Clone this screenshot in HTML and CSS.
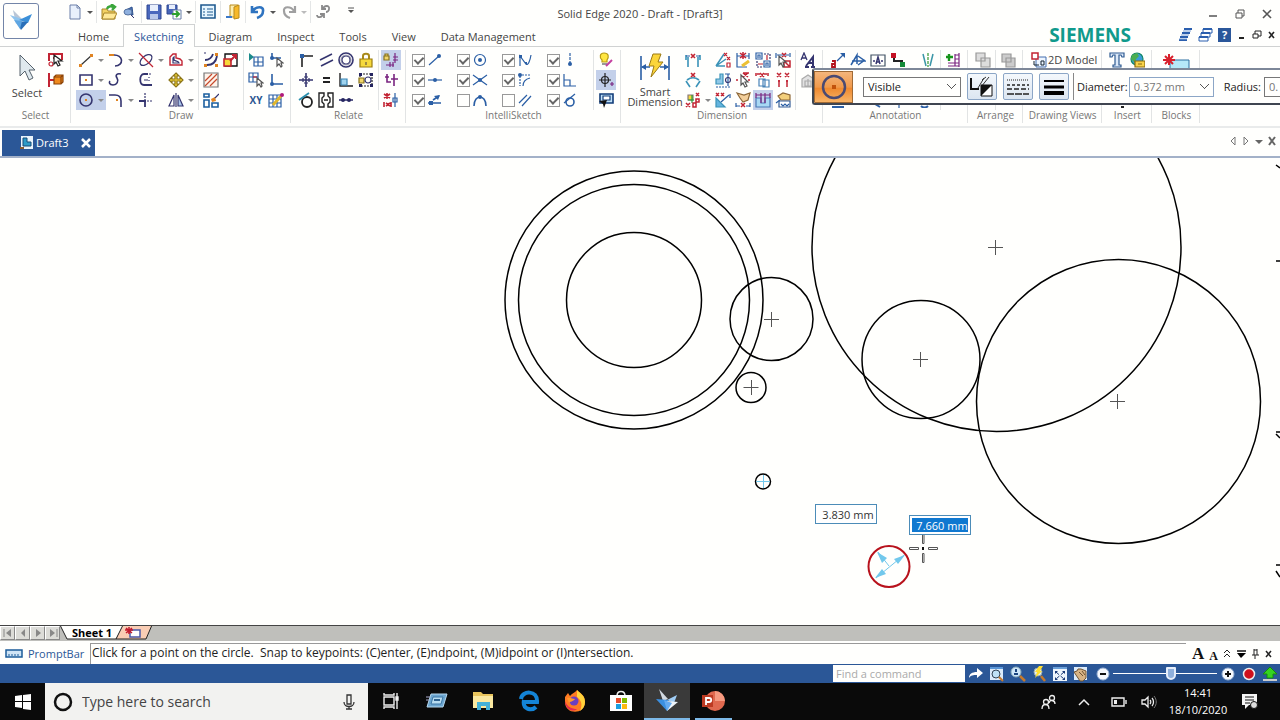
FILE: index.html
```html
<!DOCTYPE html>
<html lang="en">
<head>
<meta charset="utf-8">
<title>Solid Edge 2020 - Draft - [Draft3]</title>
<link rel="stylesheet" href="styles.css">
</head>
<body>
<header class="head">
  <button class="logo" aria-label="Application menu"><svg width="24" height="24" viewBox="0 0 24 24"><path fill="#b9c6d6" d="M4 1l9 9-6 5z"/><path fill="#8fc4ee" d="M1 6l12 4-4 5z"/><path fill="#3b8fd8" d="M10 11l13-6-4 9z"/><path fill="#2a6fb8" d="M7 12l12 1-7 8z"/><path fill="#5ea6e2" d="M5 11l8 1-2 8z"/></svg></button>
  <div class="qat">
    <button class="q" aria-label="New"><svg><path fill="#e8f0fc" stroke="#6b7fa8" d="M3 1h7l3 3v11H3zM10 1v3h3"/></svg></button><i class="dn"></i><i class="sep"></i>
    <button class="q" aria-label="Open"><svg><path fill="#f3d264" stroke="#a8862a" d="M1 5h5l1 2h7v8H1z"/><path fill="#ffe998" stroke="#a8862a" d="M3 9h13l-3 6H1z"/><path stroke="#3aa63a" stroke-width="2.4" d="M6 5c1-3 4-3 6-2M10 0l4 3-3 3"/></svg></button>
    <button class="q" aria-label="Pin"><svg><path fill="#4d74b4" stroke="#2b4f8c" d="M11 3l1 8-4-1-3-4z"/><ellipse cx="7" cy="8" rx="4" ry="3" fill="#8fb0de" stroke="#54719f"/><path d="M10 11l3 3"/></svg></button><i class="sep"></i>
    <button class="q" aria-label="Save"><svg><path fill="#4a68bd" stroke="#2f4790" d="M1 1h14v14H1z"/><path fill="#e8effc" d="M4 1h8v6H4z" stroke="none"/><path fill="#b9c8ea" d="M4 10h8v5H4z" stroke="none"/></svg></button>
    <button class="q" aria-label="Save all"><svg><path fill="#4766b8" stroke="#2f4790" d="M1 1h10v9H1z"/><path fill="#e8effc" stroke="none" d="M3 1h6v4H3z"/><path fill="#fff" stroke="#6b7fa8" d="M7 6h8v9H7z"/><path stroke="#2da12d" stroke-width="2" d="M6 10h6M10 7l3 3-3 3"/></svg></button><i class="dn"></i><i class="sep"></i>
    <button class="q" aria-label="List"><svg><path fill="#e6f6ff" stroke="#1f5a8f" stroke-width="1.600" d="M1 1h14v13H1z"/><path stroke="#1f5a8f" d="M3 5h2M7 5h6M3 8h2M7 8h6M3 11h2M7 11h6"/></svg></button><i class="sep"></i>
    <button class="q" aria-label="Exit"><svg><path fill="#fdeeb0" stroke="#b98a18" d="M5 1h8v12H5z"/><path fill="#f7b928" stroke="#b98a18" d="M9 3l5-2v13l-5 1z"/><path stroke="#3a78c8" stroke-width="2" d="M1 13h6"/></svg></button><i class="sep"></i>
    <button class="q" aria-label="Undo"><svg><path stroke="#2f74c0" stroke-width="2.6" d="M3 7c3-5 11-5 10 0 0 4-3 6-6 7M2 2v6h6"/></svg></button><i class="dn"></i>
    <button class="q gap" aria-label="Redo"><svg><path stroke="#a0a0a0" stroke-width="2.2" d="M13 7C10 2 2 2 3 7c0 4 3 6 6 7M14 2v6H8"/></svg></button><i class="dn pale"></i><i class="sep"></i>
    <button class="q" aria-label="Repeat"><svg><path stroke="#8a8a8a" stroke-width="1.8" d="M8 5c1-4 7-4 6 0 0 2-2 3-3 3M7 1v4h4M8 10c-1 4-6 4-6 1M9 14v-4H5"/></svg></button><button class="q more" aria-label="Customise toolbar"><svg><path stroke="#555" d="M5 4h6"/><path fill="#555" stroke="none" d="M5 6h6l-3 3z"/></svg></button>
  </div>
  <h1 class="title">Solid Edge 2020 - Draft - [Draft3]</h1>
  <div class="win">
    <button aria-label="Minimise"><svg><path stroke-width="1.500" d="M4 10h8"/></svg></button>
    <button aria-label="Restore"><svg><path d="M4 7h6v5H4zM6 7V4h6v6h-2"/></svg></button>
    <button aria-label="Close"><svg><path stroke-width="1.6" d="M4 4l8 8M12 4l-8 8"/></svg></button>
  </div>
  <nav class="tabs">
    <button class="tab">Home</button><button class="tab on">Sketching</button><button class="tab">Diagram</button><button class="tab">Inspect</button><button class="tab">Tools</button><button class="tab">View</button><button class="tab">Data Management</button>
    <strong class="brand">SIEMENS</strong>
    <div class="mdi">
      <button class="q" aria-label="Cascade"><svg><path stroke="#2b5fae" stroke-width="2" d="M7 2h8M5 6h8M3 10h8M2 13h8"/><path stroke="#7a9fd4" d="M6 4h8M4 8h8M2 12h8"/></svg></button>
      <button class="q" aria-label="Switch windows"><svg><path fill="#fff" stroke="#2b5fae" d="M6 2h9v4H6zM4 6h9v4H4zM2 10h9v4H2z"/><path stroke="#2b5fae" stroke-width="2" d="M6 2h9M4 6h9M2 10h9"/></svg></button>
      <button class="q help" aria-label="Help">?</button>
      <button class="s" aria-label="Minimise document"><svg><path stroke="#222" stroke-width="2" d="M5 11h5"/></svg></button>
      <button class="s" aria-label="Restore document"><svg><path stroke="#222" d="M4 7h5v4H4zM6 7V4h6v5H9"/></svg></button>
      <button class="s" aria-label="Close document"><svg><path stroke="#222" stroke-width="1.6" d="M5 5l5 6M10 5l-5 6"/></svg></button>
    </div>
  </nav>
</header>

<section class="ribbon" aria-label="Sketching">
  <div class="group">
    <div class="body lead">
      <button class="big"><svg width="22" height="30"><path fill="#dfe9ee" stroke="#56626c" d="M4 2v21l5-5 4 9 4-2-4-8h6z"/></svg><span>Select</span></button>
      <div class="grid g20">
        <button aria-label="Select options"><svg><path class="r" stroke-width="2" d="M1 9V2h13v6M5 6h2"/><circle class="r" cx="3" cy="12" r="2"/><path fill="#fff" stroke="#222" d="M6 3v9l2-2 2 4 2-1-2-4h4z"/></svg></button>
        <button aria-label="Part"><svg><path class="r" stroke-width="2" d="M1 1v14M1 8h6"/><path fill="#f08a1d" stroke="#8a4308" d="M6 5l2-2h7v7l-2 2H6zM6 5h7v7M13 5l2-2"/></svg></button>
      </div>
    </div>
    <span class="cap">Select</span>
  </div>
  <div class="group">
    <div class="body">
      <div class="grid g30">
        <button class="dd" aria-label="Line"><svg><path d="M3 13L14 3" stroke="#333"/><path class="o" d="M1 12h3v3H1zM12 2h3v3h-3z"/></svg></button>
        <button class="dd" aria-label="Rectangle"><svg><path stroke-width="1.6" d="M2 3h12v10H2z"/><path class="o" d="M7 7h2v2H7z"/></svg></button>
        <button class="dd sel" aria-label="Circle"><svg><circle cx="8" cy="8" r="6" stroke-width="1.6"/><path class="o" d="M7 7h2v2H7z"/></svg></button>
        <button class="dd" aria-label="Arc"><svg><path stroke-width="1.6" d="M5 3c11-1 11 11 2 11"/><path class="o" d="M1 2h5v2H1z"/></svg></button>
        <button aria-label="Curve"><svg><path stroke-width="1.6" d="M13 2c-4-1-6 1-4 4s0 7-4 7-4-3-3-4"/></svg></button>
        <button class="dd" aria-label="Fillet"><svg><path stroke-width="1.6" d="M1 3h6c4 0 6 2 6 6v6"/><path class="o" d="M8 7h2v2H8z"/></svg></button>
        <button class="dd" aria-label="Split"><svg><ellipse cx="8" cy="8" rx="7" ry="4" transform="rotate(-40 8 8)"/><path class="r" d="M1 1l14 14"/></svg></button>
        <button aria-label="Extend"><svg><path stroke-width="1.8" d="M10 2H6c-5 0-5 11 0 11h8"/><path d="M11 2h2M11 5v1M11 8v1M6 8h4"/></svg></button>
        <button aria-label="Trim corner"><svg><path stroke-width="1.8" d="M1 9h7M7 9v6"/><path stroke-dasharray="2 1" d="M7 1v7M9 9h6"/></svg></button>
        <button class="dd" aria-label="Offset"><svg><path class="r" stroke-width="1.4" d="M2 13V5l3-3h3v4l4 1 2 2v4z"/><path d="M5 11V6l1-1v3c2 2 4 0 5 3z"/></svg></button>
        <button class="dd" aria-label="Move"><svg><path fill="#f7d93a" stroke="#8b7418" d="M8 1l3 3H9v3h3V5l3 3-3 3V9H9v3h2l-3 3-3-3h2V9H4v2L1 8l3-3v2h3V4H5z"/></svg></button>
        <button class="dd" aria-label="Mirror"><svg><path fill="#a9c4e8" d="M10 4v10h5z" stroke="none"/><path d="M6 3v11H1zM10 3v11h5zM8 1v14"/></svg></button>
      </div>
      <i class="rule"></i>
      <div class="grid g20">
        <button aria-label="Blend"><svg><path stroke-width="1.8" d="M2 8c5 0 7-3 8-6M4 13c6 0 9-3 10-9"/><path class="o" d="M1 12h3v3H1zM12 1h3v3h-3zM12 12h3v3h-3z"/><path d="M1 1h2"/></svg></button>
        <button aria-label="Fill"><svg><path fill="#fff3ea" stroke="#777" d="M1 1h14v14H1z"/><path stroke="#c6492c" d="M2 9l7-7M2 14L14 2M7 14l7-7"/></svg></button>
        <button aria-label="Clean sketch"><svg><path stroke="#1c5f9e" stroke-width="1.6" d="M1 2h5v3H1zM1 8h5v7H1zM9 11h6v4H9z"/><path class="o" d="M8 7l4-2 1 4-4 1z"/><path d="M12 6l4-4"/></svg></button>
        <button aria-label="Scale"><svg><path stroke="#111" stroke-width="1.4" d="M2 2h12v12H2z"/><path fill="#f7d93a" class="r" stroke-width="1.6" d="M1 7h7v7H1z"/><path class="r" stroke-width="2" d="M7 9l6-6M9 3h4v4"/></svg></button>
      </div>
      <i class="rule"></i>
      <div class="grid g20">
        <button aria-label="Snap to grid"><svg><path fill="#1b8b8b" stroke="none" d="M1 1l5 4-5 4z"/><path class="b" d="M6 5h9v9H6zM10 5v9M6 10h9"/></svg></button>
        <button aria-label="Select grid"><svg><path class="b" d="M1 1h9v9H1zM5 1v9M1 5h9"/><path class="r" d="M5 5h4"/><path fill="#fff" stroke="#555" d="M9 6v8l2-2 2 3 1-1-1-3h2z"/></svg></button>
        <button aria-label="XY key-in"><b class="xy">XY</b></button>
        <button aria-label="Reposition origin"><svg><path class="b" stroke-width="1.6" d="M4 1v5h9"/><circle class="bf" cx="4" cy="6" r="2"/><path fill="#fff" stroke="#555" d="M9 6v8l2-2 2 3 1-1-1-3h2z"/></svg></button>
        <button aria-label="Zero origin"><svg><path class="b" stroke-width="1.6" d="M4 2v10h11"/><circle class="bf" cx="4" cy="12" r="2"/></svg></button>
        <button aria-label="Grid options"><svg><path class="b" d="M1 3h12v12H1zM5 3v12M9 3v12M1 7h12M1 11h12"/><path stroke="#e0b62c" stroke-width="3" d="M5 13l8-9"/><circle cx="14" cy="3" r="2" fill="#b0187a" stroke="none"/></svg></button>
      </div>
    </div>
    <span class="cap">Draw</span>
  </div>
  <div class="group">
    <div class="body">
      <div class="grid g20">
        <button aria-label="Connect"><svg><path stroke="#222" stroke-width="1.6" d="M4 15V4h11"/><path class="bf" d="M2 2h4v4H2z"/></svg></button>
        <button aria-label="Horizontal or vertical"><svg><path stroke-width="1.6" d="M1 8h14M8 1v14"/><path d="M5 6v4M11 6v4M6 5h4M6 11h4"/></svg></button>
        <button aria-label="Tangent"><svg><circle cx="9" cy="10" r="5" stroke="#222" stroke-width="1.8"/><path stroke="#2a8fae" stroke-width="1.8" d="M1 8l10-7"/></svg></button>
        <button aria-label="Parallel"><svg><path stroke-width="1.6" d="M2 8l12-6M3 14l12-6"/></svg></button>
        <button aria-label="Equal"><svg><path stroke="#222" stroke-width="2" d="M5 6h7M5 10h7"/></svg></button>
        <button aria-label="Symmetric"><svg><path stroke="#222" stroke-width="1.4" d="M1 1h5v3L4 6v4l2 2v3H1zM15 1h-5v3l2 2v4l-2 2v3h5zM6 8h4"/></svg></button>
        <button aria-label="Concentric"><svg><circle cx="8" cy="8" r="7" stroke-width="1.6"/><circle cx="8" cy="8" r="5" stroke="#aab"/><circle cx="8" cy="8" r="4"/></svg></button>
        <button aria-label="Perpendicular"><svg><path stroke="#222" stroke-width="1.4" d="M2 1v13h13"/><path fill="#9fd3ee" stroke="#3b86b5" d="M3 7h6v6H3z"/></svg></button>
        <button aria-label="Collinear"><svg><path stroke-width="1.6" d="M1 8h14"/><circle class="nf" cx="5" cy="8" r="2"/><circle class="nf" cx="11" cy="8" r="2"/></svg></button>
        <button aria-label="Lock"><svg><path stroke="#a88a1a" stroke-width="2" d="M5 7V4c0-3 6-3 6 0v3"/><path fill="#f6d93c" stroke="#9a7c10" d="M2 7h12v8H2z"/><path stroke="#654" d="M8 10v3"/></svg></button>
        <button aria-label="Rigid set"><svg><path stroke="#222" stroke-dasharray="2 1" d="M2 2h12v12H2z"/><path class="nf" d="M1 1h3v3H1zM12 1h3v3h-3zM12 12h3v3h-3zM1 12h3v3H1z"/><path fill="#f1d66a" stroke="#87721f" d="M1 6h5v5H1z"/><circle cx="10" cy="8" r="3"/></svg></button>
      </div>
      <i class="rule"></i>
      <div class="grid g20">
        <button class="sel" aria-label="Maintain relationships"><svg><path fill="#f1d66a" stroke="#87721f" d="M1 4h5v4H1zM2 4V2h3v2"/><path class="p" d="M3 13h8M7 10v5M10 10v5M12 1v10M10 5h5M10 8h5"/></svg></button>
        <button aria-label="Relationship handles"><svg><path class="p" stroke-width="1.6" d="M4 2v8h4M2 5h4M11 2v12M8 7h7"/></svg></button>
        <button aria-label="Relationship colours"><svg><path class="r" stroke-width="1.6" d="M4 1v6M1 2l6 4M1 6l6-4M1 10v5M8 10v5M3 11l4 3M3 14l4-3"/><path class="b" d="M12 1v14M10 6h4v4h-4z"/></svg></button>
      </div>
    </div>
    <span class="cap">Relate</span>
  </div>
  <div class="group">
    <div class="body">
      <div class="grid g45">
        <label><input type="checkbox" checked aria-label="Endpoint"><svg><path class="b" d="M2 13L12 4"/><circle class="bf" cx="12" cy="4" r="2"/></svg></label>
        <label><input type="checkbox" checked aria-label="Midpoint"><svg><path class="b" d="M1 8h14"/><circle class="bf" cx="8" cy="8" r="2"/></svg></label>
        <label><input type="checkbox" checked aria-label="Point on"><svg><path class="b" stroke-width="1.6" d="M1 11h13M6 8l6-4"/><path class="bf" d="M7 4l6-1-2 5zM2 9h4v4H2z"/></svg></label>
        <label><input type="checkbox" checked aria-label="Centre"><svg><circle class="b" cx="8" cy="8" r="5.500"/><circle class="bf" cx="8" cy="8" r="2"/></svg></label>
        <label><input type="checkbox" checked aria-label="Intersection"><svg><path class="b" d="M1 3l14 10M1 13L15 3"/><circle class="bf" cx="8" cy="8" r="2"/></svg></label>
        <label><input type="checkbox" aria-label="Silhouette"><svg><path class="b" stroke-width="1.6" d="M2 14c0-12 12-12 12 0"/><circle class="bf" cx="8" cy="5" r="2"/></svg></label>
        <label><input type="checkbox" checked aria-label="Edit point"><svg><path class="b" d="M3 14V4l6 8c2 2 4-3 5-9"/><path class="bf" d="M2 3h3v3H2zM8 10h2v2H8z"/></svg></label>
        <label><input type="checkbox" checked aria-label="Alignment"><svg><path class="b" stroke-dasharray="2 1" d="M2 3h12M3 4v10"/><circle class="bf" cx="3" cy="3" r="2"/><path class="b" d="M6 14c0-5 3-7 7-8"/></svg></label>
        <label><input type="checkbox" aria-label="Parallel lines"><svg><path class="b" d="M2 11L10 3M5 14l9-10"/></svg></label>
        <label><input type="checkbox" checked aria-label="Vertical"><svg><path class="b" stroke-dasharray="3 1" d="M8 1v11"/><circle class="bf" cx="8" cy="12" r="2"/></svg></label>
        <label><input type="checkbox" checked aria-label="Right angle"><svg><path class="b" d="M2 2v12h12M2 8h6v6"/></svg></label>
        <label><input type="checkbox" checked aria-label="Tangent point"><svg><circle class="b" cx="8" cy="10" r="4" stroke-width="1.6"/><path class="b" d="M2 11L13 2"/></svg></label>
      </div>
      <i class="rule"></i>
      <div class="grid g20">
        <button aria-label="Hints"><svg><path fill="#ffe640" stroke="#b79a16" d="M6 1c5 0 5 4 3 7v2H4V8C1 5 2 1 6 1z"/><path stroke="#555" d="M4 12h5"/><path stroke="#c43fa0" stroke-width="2" d="M8 14l6-6"/></svg></button>
        <button class="sel" aria-label="Alignment indicator"><svg><circle cx="7" cy="8" r="3.500" stroke="#222"/><path stroke="#222" d="M1 8h12M7 1v14"/><path class="p" d="M12 12h4M14 10v4"/></svg></button>
        <button aria-label="IntelliSketch options"><svg><path fill="#bfe0f7" stroke="#123c78" stroke-width="1.600" d="M2 2h13v9H2z"/><path fill="#fff" stroke="#123c78" d="M5 4h7v4H5z"/><path fill="#111" stroke="none" d="M1 9l8-1-3 8-1-4z"/></svg></button>
      </div>
    </div>
    <span class="cap">IntelliSketch</span>
  </div>
  <div class="group">
    <div class="body">
      <button class="big dim"><svg width="32" height="30"><path class="b" stroke-width="1.600" d="M2 4v24M30 4v24M3 15h8M21 15h8"/><path class="bf" d="M2 15l5-3v6zM30 15l-5-3v6z"/><path fill="#fbd53a" stroke="#9c7a14" d="M14 2h8l-3 8h5L12 25l3-11h-5z"/></svg><span>Smart Dimension</span></button>
      <div class="grid c30">
        <button aria-label="Distance between"><svg><path class="c" stroke-width="1.600" d="M1 3v5M15 3v5M3 5v10M13 5v10"/><path class="b" d="M1 4h4M11 4h4"/><path class="r" stroke-width="1.600" d="M6 2l4 4M10 2L6 6"/></svg></button>
        <button aria-label="Angle between"><svg><path class="c" stroke-width="1.600" d="M1 9l4 6M15 9l-4 6M2 8c4-3 8-3 12 0"/><path class="r" stroke-width="1.600" d="M6 1l4 4M10 1L6 5"/></svg></button>
        <button class="dd" aria-label="Coordinate"><svg><path fill="#f7d93a" stroke="#877" d="M3 3h5v5H3z"/><path stroke="#2a9a3a" d="M3 8h6M7 3v8"/><path class="r" stroke-width="1.500" d="M11 1l3 3M14 1l-3 3M11 7h3v3h-3zM1 11l4 4M5 11l-4 4M8 11h3v4H8z"/></svg></button>
      </div>
      <div class="grid g20">
        <button aria-label="Angular coordinate"><svg><path class="c" stroke-width="1.500" d="M1 14L9 2M1 14l10-7M1 14h9"/><path class="r" d="M9 1l3 3M12 1L9 4M12 5l3 3M15 5l-3 3M12 11h3v4h-3z"/></svg></button>
        <button aria-label="Symmetric diameter"><svg><path fill="#90c8e8" class="c" d="M1 12V7h4V2h3v10z"/><path class="b" stroke-dasharray="2 1" d="M1 15h14"/><path class="b" d="M10 2h5M13 2v12"/><circle cx="13" cy="8" r="2.500"/></svg></button>
        <button aria-label="Chamfer"><svg><path fill="#65b5df" class="c" d="M1 15V6l9 9z"/><path class="b" d="M6 10l8-7M15 2v4"/><path class="r" stroke-width="1.500" d="M1 1l3 3M4 1L1 4M6 1l3 3M9 1L6 4"/></svg></button>
        <button aria-label="Auto dimension"><svg><path class="b" d="M2 1v14h10M2 4h12M14 1v6"/><path class="r" stroke-width="1.500" d="M5 1l6 5M11 1L5 6M8 0v7"/><path stroke="#ecc133" stroke-width="3" d="M7 14l7-5"/></svg></button>
        <button aria-label="Attach"><svg><path class="r" stroke-width="1.600" d="M1 8h2M13 8h2M8 1h6M8 1l5 4M13 1L8 5"/><path fill="#fff" stroke="#555" d="M6 3v10l2-2 2 4 2-1-2-4h3z"/></svg></button>
        <button aria-label="Line up"><svg><path fill="#f3cf9b" stroke="#8d6737" d="M2 1l7 2 6-2-2 7-5 2-3-4z"/><path class="b" d="M1 11v4M15 11v4M1 14h4M11 14h4"/><path class="r" stroke-width="1.500" d="M6 11l4 4M10 11l-4 4"/></svg></button>
        <button aria-label="Arrange text"><svg><path class="b" d="M1 1h6v6H1zM9 9h6v6H9zM3 6V3h2v3M11 14v-3h2v3"/><path stroke-dasharray="2 1" d="M9 2h6v5M2 9v6h6"/><path class="r" d="M12 8V3M8 12H3"/></svg></button>
        <button aria-label="Copy attributes"><svg><path class="r" stroke-width="1.500" d="M1 1v3M13 1v3M2 2h3M9 2h3M5 1l4 4M9 1L5 5"/><path fill="#fff" stroke="#4984b8" d="M4 7h6v7H4zM8 8h6v7H8z"/></svg></button>
        <button class="sel" aria-label="Maintain alignment set"><svg><path fill="#a9d8f4" stroke="#4a78b5" d="M1 6h5v5h4V6h5v9H1z"/><path class="p" d="M1 3h14M1 1v5M6 1v10M10 1v10M15 1v5"/></svg></button>
        <button aria-label="Remove from set"><svg><path class="b" d="M1 1v5M15 1v4M2 3h12"/><path class="r" stroke-width="1.500" d="M7 1l4 4M11 1L7 5M9 9h6v6H9zM10 10l4 4"/><path fill="#fff" stroke="#555" d="M4 4v9l2-2 2 4 1-1-1-4h3z"/></svg></button>
        <button aria-label="Retrieve dimensions"><svg><path class="r" stroke-width="1.500" d="M2 1l4 4M6 1L2 5M10 1l4 4M14 1l-4 4M4 8v7M12 8v7M3 9h2M11 9h2"/></svg></button>
        <button aria-label="Properties"><svg><path fill="#f3cf7b" stroke="#8d6737" d="M3 4l5-3 7 2v5H6z"/><path fill="#fff" stroke="#345d96" d="M4 9h11v6H4z"/><path class="b" d="M1 11l4-3M6 12l2 2 2-2 2 2 2-2"/></svg></button>
      </div>
      <i class="rule"></i>
      <div class="grid g20">
        <button aria-label="Text style"><svg><path stroke-width="1.300" d="M1 8l3-7 3 7M2 6h4"/><path stroke-width="2" d="M6 14l7-9v9M8 11h5M5 15h4M11 15h4"/></svg></button>
        <button aria-label="Dimension style"><svg><path fill="#e2e2e2" stroke="#aaa" d="M2 7l6-4 6 4v8H2zM5 9h6v5H5zM8 7v7"/></svg></button>
      </div>
    </div>
    <span class="cap">Dimension</span>
  </div>
  <div class="group">
    <div class="body">
      <div class="grid g20 wide">
        <button aria-label="Leader"><svg><path stroke="#b3121c" stroke-width="1.800" d="M2 9h3v6H2v-3h3"/><path class="b" d="M7 9l7-7"/><path class="bf" d="M10 1h5v5z"/></svg></button><span></span><button aria-label="Weld symbol"><svg><path class="b" stroke-width="2" d="M2 15h12"/></svg></button>
        <button aria-label="Balloon"><svg><path class="b" stroke-width="1.500" d="M1 13L7 3v9M8 4l7 5H2M8 13l7-5"/></svg></button><span></span><span></span>
        <button aria-label="Callout"><svg><path stroke="#456" d="M1 3h14v11H1z"/><path stroke-width="1.500" d="M3 9h2M11 9h2M6 12l2-7 2 7M7 10h2"/></svg></button><span></span><button aria-label="Edge"><svg><path class="b" stroke-width="2" d="M5 12l5 3"/></svg></button>
        <button aria-label="Connector"><svg><path stroke="#222" stroke-width="2" d="M4 4v5h8v4"/><path stroke="none" fill="#c41226" d="M1 1h5v5H1z"/><path stroke="none" fill="#138a38" d="M10 10h5v5h-5z"/></svg></button><span></span><button aria-label="Surface"><svg><path class="b" d="M9 11v5"/></svg></button>
      </div>
      <div class="grid g20">
        <button aria-label="Centre line"><svg><path stroke="#3b96a8" stroke-width="1.500" d="M3 2l3 12M13 2l-3 12"/><path stroke="#393" stroke-dasharray="3 1" d="M8 1v14"/></svg></button><span></span><button aria-label="Hole"><svg><path class="b" stroke-width="2" d="M1 14c2 2 5 2 7 0"/></svg></button>
      </div>
      <i class="rule"></i>
      <div class="grid g20"><button aria-label="Add row"><svg><path stroke="#16941b" stroke-width="2.400" d="M1 5h7M4 2v7"/><path class="p" d="M10 3h4M10 7h4M3 11h11M3 14h11M14 1v14M10 2v12"/></svg></button></div>
    </div>
    <span class="cap">Annotation</span>
  </div>
  <div class="group">
    <div class="body">
      <div class="grid g20"><button aria-label="Bring to front"><svg><path fill="#ddd" stroke="#999" d="M1 1h9v8H1zM6 6h9v9H6z"/></svg></button></div>
      <i class="rule"></i>
      <div class="grid g20"><button aria-label="Send to back"><svg><path fill="#ccc" stroke="#999" d="M6 6h9v9H6zM2 2h9v8H2z"/></svg></button></div>
    </div>
    <span class="cap">Arrange</span>
  </div>
  <div class="group">
    <div class="body"><button class="text"><svg><path fill="#edf5ff" stroke="#456fae" d="M5 5h10v10H5z"/><path class="r" fill="#fff" stroke-width="1.500" d="M1 1h6v6H1z"/><path stroke="#123" d="M3 9v4h5M10 9h3v4h-3z"/></svg>2D Model</button></div>
    <span class="cap">Drawing Views</span>
  </div>
  <div class="group">
    <div class="body">
      <div class="grid g20">
        <button aria-label="Text"><svg><path fill="#dce9f8" stroke="#2f5b92" d="M1 1h14v4h-2l-1-2h-2v10h2v2H4v-2h2V3H4L3 5H1z"/></svg></button><span></span><button aria-label="Picture"><svg><path stroke="#222" stroke-width="2" d="M12 15h3"/></svg></button>
        <button aria-label="Link"><svg><circle cx="8" cy="7" r="6" fill="#3b9dd8" stroke="#186"/><path fill="#4bae50" stroke="none" d="M3 3l5-2 2 3-3 3-1 4-4-4z"/><path fill="#f7d24a" stroke="#8c6a10" d="M6 9h10v6H6zM9 12h4"/></svg></button>
      </div>
    </div>
    <span class="cap">Insert</span>
  </div>
  <div class="group">
    <div class="body"><button class="blk" aria-label="Block"><svg width="28" height="26"><path fill="#b5e8f8" stroke="#2d6fa0" d="M8 9h19v15H8z"/><path stroke="#d8202c" stroke-width="2" d="M7 3v11M1 9h12M3 5l8 8M11 5l-8 8"/></svg></button></div>
    <span class="cap">Blocks</span>
  </div>

  <form class="cmd" aria-label="Circle command">
    <button type="button" class="circ" aria-label="Circle by centre"><svg width="30" height="30"><circle cx="15" cy="15" r="11" fill="none" stroke="#4a4a72" stroke-width="2.500"/><path fill="#c1520b" stroke="none" d="M13 13h4v4h-4z"/></svg></button>
    <select class="vis" aria-label="Line style"><option>Visible</option></select>
    <button type="button" class="st" aria-label="Line colour"><svg width="26" height="24"><path d="M2 3v11h8" stroke="#111" stroke-width="2" fill="none"/><path fill="none" d="M9 13l6-10M12 12L20 2M13 5l4-3" stroke="#333"/><path fill="#fff" stroke="#111" d="M12 10h11v11H12z"/><path d="M12 10h11L12 21z"/></svg></button>
    <button type="button" class="st" aria-label="Line type"><svg width="26" height="24"><path stroke="#222" stroke-dasharray="1 1" d="M2 5h22"/><path stroke="#222" stroke-width="1.500" stroke-dasharray="3 2" d="M2 10h22"/><path stroke="#222" stroke-width="1.500" stroke-dasharray="5 2" d="M2 14h22"/><path stroke="#222" stroke-width="1.500" stroke-dasharray="7 1" d="M2 19h22"/></svg></button>
    <button type="button" class="st" aria-label="Line width"><svg width="26" height="24"><path stroke="#000" stroke-width="2" d="M3 6h20"/><path stroke="#000" stroke-width="3" d="M3 12h20"/><path stroke="#000" stroke-width="4" d="M3 18h20"/></svg></button>
    <i class="bar"></i>
    <label for="dia">Diameter:</label>
    <select id="dia" class="dia"><option>0.372 mm</option></select>
    <label for="rad">Radius:</label>
    <input id="rad" class="rad" value="0.">
  </form>
</section>

<div class="docs">
  <div class="doc"><svg width="16" height="16"><path fill="#e8f3fb" d="M2 1h12v13H2z"/><path fill="#2d9bc8" stroke="#174a78" d="M4 3h4v4h4v4H4z"/><path stroke="#8a5a30" stroke-width="2" d="M1 13h4"/></svg><span>Draft3</span><button aria-label="Close Draft3"><svg width="10" height="10"><path stroke="#fff" stroke-width="2.500" d="M1 1l8 8M9 1L1 9"/></svg></button></div>
  <div class="docnav">
    <button aria-label="Previous"><svg width="8" height="10"><path fill="none" stroke="#777" d="M6 1v8L2 5z"/></svg></button>
    <button aria-label="Next"><svg width="8" height="10"><path fill="none" stroke="#777" d="M2 1v8l4-4z"/></svg></button>
    <button aria-label="Documents"><svg width="8" height="10"><path fill="#666" d="M0 4h8L4 8z"/></svg></button>
    <button aria-label="Close"><svg width="8" height="10"><path stroke="#666" stroke-width="2" d="M1 1l6 8M7 1L1 9"/></svg></button>
  </div>
</div>

<main class="canvas">
  <svg class="draw" viewBox="0 158 1280 467" preserveAspectRatio="xMinYMin slice" aria-label="Drawing sheet">
    <g fill="none" stroke="#000" stroke-width="1.500">
      <circle cx="634" cy="300" r="129"/><circle cx="634" cy="300" r="115.500"/><circle cx="634" cy="300" r="67.500"/>
      <circle cx="771.500" cy="319" r="41.500"/><circle cx="751" cy="387.500" r="15"/><circle cx="763" cy="481.500" r="7.500"/>
      <circle cx="996.500" cy="247" r="184.500"/><circle cx="921" cy="359.500" r="59"/><circle cx="1118.500" cy="401.500" r="142"/>
      <path d="M1276 165l4 3M1276 261h4M1276 432h4M1276 434l4 4M1276 565h4M1276 571l4 6"/>
    </g>
    <path fill="none" stroke="#555" d="M764 319.500h15M771.500 312v15M743.500 387.500h15M751.500 380v15M988 247.500h15M995.500 240v15M913 359.500h15M920.500 352v15M1110 401.500h15M1117.500 394v15"/>
    <path fill="none" stroke="#72c8ec" d="M756 481.500h14M763.500 475v13M878 552l11 14M876 578l28-23"/>
    <path fill="#72c8ec" d="M877 552l10 6-5 5zM905 555l-7 9-4-5zM875 578l7-9 4 5z"/>
    <circle cx="889" cy="566.500" r="20.500" fill="none" stroke="#b8121c" stroke-width="2"/>
    <path fill="#fff" stroke="#555" d="M909.500 547.500h9v2h-9zM928.500 547.500h9v2h-9zM922.500 534.500h1.500v9h-1.500zM922.500 553.500h1.500v9h-1.500z"/><path fill="#111" d="M922 547h2v3h-2z"/>
  </svg>
  <input class="dyn radius" value="3.830 mm" aria-label="Radius value">
  <input class="dyn diam" value="7.660 mm" aria-label="Diameter value">
</main>

<div class="sheets">
  <button class="nav" aria-label="First sheet"><svg width="12" height="12"><path stroke="#888" d="M2 2v8"/><path fill="#888" d="M9 2v8L4 6z"/></svg></button>
  <button class="nav" aria-label="Previous sheet"><svg width="12" height="12"><path fill="#888" d="M8 2v8L4 6z"/></svg></button>
  <button class="nav" aria-label="Next sheet"><svg width="12" height="12"><path fill="#888" d="M4 2v8l5-4z"/></svg></button>
  <button class="nav" aria-label="Last sheet"><svg width="12" height="12"><path stroke="#888" d="M10 2v8"/><path fill="#888" d="M3 2v8l5-4z"/></svg></button>
  <button class="sheet">Sheet 1<svg class="edge" width="64" height="15" viewBox="0 0 64 15"><path fill="#fffffd" stroke="#222" d="M0-1l7 14h49l7-14"/></svg></button>
  <button class="add" aria-label="New sheet"><svg width="38" height="15"><path fill="#f9cdb4" stroke="#222" d="M1 13L6-1h31l-6 14z"/><path fill="#fff" stroke="#4a58a8" stroke-width="1.500" d="M15 4h10v7H15z"/><path stroke="#c31a2d" stroke-width="1.500" d="M14 1v7M10 4h8M11 2l6 5M17 2l-6 5"/></svg></button>
</div>

<div class="prompt">
  <div class="pname"><svg width="18" height="9"><path fill="#cfe4f5" stroke="#1d5c99" stroke-width="1.500" d="M1 1h16v7H1z"/><path stroke="#1d5c99" d="M4 5v2M7 5v2M10 5v2M13 5v2"/></svg>PromptBar</div>
  <output class="ptext">Click for a point on the circle.&nbsp; Snap to keypoints: (C)enter, (E)ndpoint, (M)idpoint or (I)ntersection.</output>
  <div class="ptools">
    <button class="fa" aria-label="Larger text">A</button><button class="fb" aria-label="Smaller text">A</button>
    <button aria-label="Collapse"><svg width="9" height="10"><path fill="none" stroke="#222" d="M1 4l3-3 3 3M1 8l3-3 3 3"/></svg></button>
    <button aria-label="Options"><svg width="9" height="10"><path stroke="#111" stroke-width="1.500" d="M0 2h9"/><path d="M0 4h9L4 9z"/></svg></button>
    <button aria-label="Pin bar"><svg width="9" height="10"><path fill="none" stroke="#222" d="M3 0v6M6 0v6M3 1h3M1 6h7M4 6v4"/></svg></button>
    <button aria-label="Close bar"><svg width="9" height="10"><path stroke="#222" stroke-width="1.500" d="M1 2l5 6M6 2L1 8"/></svg></button>
  </div>
</div>

<div class="status">
  <input class="find" placeholder="Find a command" aria-label="Find a command">
  <button aria-label="Go"><svg><path fill="#fff" d="M1 12c0-4 3-6 8-6V2l6 5-6 5V9c-4 0-6 0-8 3z"/></svg></button>
  <button aria-label="Zoom area"><svg><path fill="#dcebfa" d="M1 1h13v13H1z"/><path fill="#5a96d8" d="M1 1h13v2H1z"/><circle cx="7" cy="8" r="4" fill="#bfe1f5" stroke="#345"/><path stroke="#c67a2c" stroke-width="2" d="M10 11l4 4"/></svg></button>
  <button aria-label="Zoom"><svg><circle cx="6" cy="6" r="5" fill="#cfe6f8" stroke="#8ab"/><path stroke="#1b4580" stroke-width="2" d="M4 8h4M6 3v3"/><path stroke="#c67a2c" stroke-width="2.500" d="M10 10l5 5"/></svg></button>
  <button aria-label="Fit"><svg><circle cx="7" cy="6" r="4" fill="#e4eef5" stroke="#9aa"/><path fill="#ffdf32" d="M8 0h4L9 5h2l-7 7 2-6H4z"/><path stroke="#c67a2c" stroke-width="2.500" d="M10 10l4 5"/></svg></button>
  <button aria-label="Full view"><svg><path fill="#eef5fc" d="M1 1h14v14H1z"/><path fill="#6ba0d8" d="M1 1h14v2H1z"/><path fill="#1b3b78" d="M3 5h3L3 8zM13 5h-3l3 3zM3 14h3l-3-3zM13 14h-3l3-3z"/><path stroke="#1b3b78" stroke-dasharray="4 2" d="M4 6l8 7M12 6l-8 7"/></svg></button>
  <button aria-label="Pan"><svg><path fill="#dcebfa" d="M1 1h13v13H1z"/><path fill="#d7b384" stroke="#6f5434" d="M3 9l-2-3 3-1 1-2h3l5 2v7l-3 3H7z"/><path stroke="#6f5434" d="M6 6l4 4M9 5l3 4"/></svg></button>
  <button class="minus" aria-label="Zoom out"><svg><circle cx="8" cy="8" r="6" fill="#f6f9fd" stroke="#9bb2d4"/><path stroke="#111" stroke-width="2" d="M5 8h6"/></svg></button>
  <input class="zoom" type="range" min="0" max="100" value="56" aria-label="Zoom level">
  <button aria-label="Zoom in"><svg><circle cx="8" cy="8" r="6" fill="#f6f9fd" stroke="#9bb2d4"/><path stroke="#111" stroke-width="2" d="M5 8h6M8 5v6"/></svg></button>
  <button aria-label="Record"><svg><circle cx="8" cy="8" r="5.500" fill="#d0101c" stroke="#eee" stroke-width="1.500"/></svg></button>
  <button aria-label="Upload"><svg><path fill="#35d220" stroke="#168a10" d="M8 1l7 7h-4v4H5V8H1z"/><path fill="#ccc" d="M1 13h14v2H1z"/></svg></button>
</div>

<footer class="task">
  <button class="start" aria-label="Start"><svg width="16" height="16"><path fill="#fff" d="M0 2l7-1v6H0zM8 1l8-1v7H8zM0 8h7v6l-7-1zM8 8h8v8l-8-1z"/></svg></button>
  <label class="search"><svg width="20" height="20"><circle cx="10" cy="10" r="8" fill="none" stroke="#111" stroke-width="2.500"/></svg><input placeholder="Type here to search" aria-label="Type here to search"><svg width="14" height="18"><path fill="none" stroke="#333" stroke-width="1.300" d="M5 2h4v9H5zM2 9c0 6 10 6 10 0M7 13v3M4 16h6"/></svg></label>
  <button class="app" aria-label="Task view"><svg width="18" height="18" fill="none" stroke="#eee" stroke-width="1.400"><path d="M2 5h10v8H2zM2 1v2h10V1M2 17v-2h10v2M15 1v16"/><path fill="#fff" d="M14 5h2v3h-2z"/></svg></button>
  <button class="app" aria-label="Run"><svg width="22" height="18"><path fill="#6ca6d0" stroke="#b6d8ef" d="M5 2h16l-4 13H1z"/><path fill="#b7dcf0" stroke="#3c77a6" d="M7 5h10l-2 7H5z"/><path stroke="#2d618f" stroke-width="2" d="M8 8h6"/><path stroke="#aac" d="M0 5h4M0 8h3"/></svg></button>
  <button class="app" aria-label="File Explorer"><svg width="22" height="20"><path fill="#e8c45c" d="M1 1h8l2 2h10v4H1z"/><path fill="#fae8a0" d="M1 5h20v12H1z"/><path fill="#43b1d8" d="M5 11h13v8h-4v-4H9v4H5z"/></svg></button>
  <button class="app" aria-label="Edge"><svg width="22" height="22" fill="none" stroke="#1484d6" stroke-width="4"><path d="M6 12h13c1-12-15-12-16-3M6 10c-2 10 8 11 12 7"/></svg></button>
  <button class="app" aria-label="Firefox"><svg width="24" height="24"><path fill="#ff7b22" d="M2 8l3-4 2 3c2-3 5-3 7-6 4 4 8 5 8 12 0 13-20 13-20 0z"/><path fill="#ffd33b" d="M14 1c4 4 8 6 8 12 0 4-2 7-5 9 3-7 1-11-3-14z"/><path fill="#e5294f" d="M2 12c2 6 7 8 12 8-4 4-12 0-12-8z"/><circle cx="11" cy="12" r="4.500" fill="#6b3fc0"/><path fill="#ff9a2b" d="M4 9c4-1 5 1 8 1-2 3-5 2-6 4z"/></svg></button>
  <button class="app" aria-label="Store"><svg width="22" height="22"><path fill="none" stroke="#eee" stroke-width="1.500" d="M7 6c0-6 8-6 8 0"/><path fill="#fff" d="M0 5h22v16H0z"/><path fill="#e84c2b" d="M6 8h5v5H6z"/><path fill="#7fba00" d="M12 8h5v5h-5z"/><path fill="#1a9fe0" d="M6 14h5v5H6z"/><path fill="#fdb913" d="M12 14h5v5h-5z"/></svg></button>
  <button class="app on" aria-label="Solid Edge"><svg width="24" height="24" viewBox="0 0 24 24"><path fill="#d3dae2" d="M4 0l9 10-5 2z"/><path fill="#3b8fe0" d="M1 10l12 1-1 11z"/><path fill="#9fccf5" d="M12 11l10-5-3 8z"/><path fill="#eef4fa" d="M12 12l11 1-11 9z"/><path fill="#65aaf0" d="M9 11l8 3-5 8z"/></svg></button>
  <button class="app run" aria-label="PowerPoint"><svg width="24" height="22"><circle cx="14" cy="11" r="10" fill="#e0694f"/><path fill="#f59a80" d="M14 1a10 10 0 0 1 10 10H14z"/><path fill="#bc3a22" d="M1 5h11v12H1z"/><path fill="none" stroke="#fff" stroke-width="1.800" d="M5 15V8h3c3 0 3 4 0 4H5"/></svg></button>
  <div class="tray">
    <button aria-label="People"><svg width="16" height="16"><path fill="none" stroke="#eee" stroke-width="1.300" d="M1 15c0-6 7-6 7 0M8 9c1-4 6-3 6 1"/><g fill="none" stroke="#eee" stroke-width="1.300"><circle cx="5" cy="8" r="2.500"/><circle cx="11" cy="4" r="2.500"/></g></svg></button>
    <button class="t2" aria-label="Hidden icons"><svg width="14" height="10"><path fill="none" stroke="#eee" stroke-width="1.500" d="M2 8l5-5 5 5"/></svg></button>
    <button aria-label="Battery"><svg width="16" height="10"><path fill="none" stroke="#eee" stroke-width="1.400" d="M1 1h12v8H1zM15 3v4"/><path fill="#eee" d="M3 3h3v4H3z"/></svg></button>
    <button aria-label="Volume"><svg width="16" height="14"><path fill="none" stroke="#eee" stroke-width="1.300" d="M1 5h3l3-3v10L4 9H1zM9 5c1 1 1 3 0 4M11 3c2 2 2 6 0 8"/><path fill="none" stroke="#777" d="M13 1c3 4 3 8 0 12"/></svg></button>
    <time class="clock"><span>14:41</span><span>18/10/2020</span></time>
    <button class="note" aria-label="Notifications"><svg width="18" height="18"><path fill="#f4f4f4" d="M1 1h15v11H8l-4 4v-4H1z"/><path stroke="#111" d="M4 4h9M4 7h9M4 10h5"/><circle cx="13" cy="12" r="3.500" fill="#ddd" stroke="#111"/></svg></button>
  </div>
</footer>
</body>
</html>
```
FILE: styles.css
```css
* { box-sizing: border-box; }
body {
  margin: 0;
  height: 100vh;
  display: flex;
  flex-direction: column;
  overflow: hidden;
  background: #fffffd;
  color: #444;
  font: 11px/14px "Open Sans", "Noto Sans", sans-serif;
}
button, input, select { font: inherit; color: inherit; }
button { padding: 0; border: 0; background: none; display: flex; align-items: center; justify-content: center; }
svg { display: block; flex: none; }

.head {
  flex: none;
  display: grid;
  grid-template-columns: 1fr auto 1fr;
  grid-template-rows: 24px 22px;
  border-bottom: 1px solid #d0d2d2;
}
.logo {
  grid-area: 1 / 1 / 3 / 2;
  z-index: 1;
  width: 36px;
  height: 36px;
  margin: 3px 0 0 3px;
  border: 1px solid #7385a8;
  border-radius: 3px;
}
.qat { grid-area: 1 / 1; display: flex; align-items: center; margin-left: 65px; }
.q { width: 20px; height: 22px; }
.q svg, .win svg, .s svg, .grid svg, .text svg, .blk svg { fill: none; stroke: #35356f; }
.q svg, .win svg, .s svg, .text svg { width: 16px; height: 16px; }
.gap { margin-left: 2px; }
.more { margin-left: 8px; }
.dn { width: 9px; display: flex; justify-content: center; }
.dn::before { content: ""; border: 3px solid transparent; border-top-color: #555; margin-top: 3px; }
.pale::before { border-top-color: #bbb; }
.sep { width: 1px; height: 22px; margin: 0 2px; background: #e4e6e6; }
.title { grid-area: 1 / 2; margin: 0; align-self: center; font-size: 11px; font-weight: 400; padding-top: 3px; }
.win { grid-area: 1 / 3; display: flex; justify-content: flex-end; gap: 11px; padding: 4px 5px 0 0; }
.win svg { stroke: #555; }
.tabs { grid-area: 2 / 1 / 3 / 4; display: flex; gap: 3px; padding-left: 67px; }
.tab { padding: 2px 11px 0; margin-bottom: -1px; border: solid transparent; border-width: 1px 0 0; }
.tab.on { background: #fffffd; color: #2b579a; border: 1px solid #d0d2d2; border-bottom: 0; padding: 2px 10px 0; }
.brand { margin-left: auto; margin-right: 41px; align-self: center; font-size: 19px; line-height: 22px; color: #109a8c; }
.mdi { display: flex; align-items: center; padding-right: 1px; }
.help { width: 13px; height: 14px; margin: 0 3px; background: #2b579a; color: #fff; font-weight: 700; }
.s { width: 15px; height: 16px; overflow: hidden; }

.ribbon {
  position: relative;
  flex: none;
  display: flex;
  padding: 3px 0;
  border-bottom: 2px solid #e9ebeb;
}
.group { flex: none; display: flex; flex-direction: column; padding: 0 4px 0 5px; border-right: 1px solid #e2e4e4; }
.body { display: flex; height: 60px; }
.lead { padding-left: 4px; gap: 1px; }
.cap { margin-top: -2px; padding-bottom: 1px; text-align: center; font-size: 10px; color: #777; }
.grid { display: grid; grid-auto-flow: column; grid-template-rows: repeat(3, 20px); align-content: start; }
.grid svg { width: 16px; height: 16px; stroke-width: 1.2; }
.g20 { grid-auto-columns: 20px; }
.g30, .c30 { grid-auto-columns: 30px; }
.g45 { grid-auto-columns: 45px; }
.g30 button, .c30 button { justify-content: flex-start; padding-left: 2px; }
.dd::after { content: ""; margin: 3px 0 0 4px; border: 3px solid transparent; border-top-color: #888; }
.sel { background: #c3d0ea; }
.rule { width: 1px; margin: 0 2px; background: #e2e4e4; }
.r { stroke: #c22433; }
.b { stroke: #2b5fa5; }
.c { stroke: #3b93b8; }
.p { stroke: #7a2580; }
.o { fill: #e08422; stroke: none; }
.bf { fill: #2b5fa5; stroke: none; }
.nf { fill: #252560; stroke: none; }
.xy { color: #2b5792; font-size: 10px; }
.big { flex-direction: column; width: 36px; justify-content: flex-start; padding-top: 3px; fill: none; }
.big span { line-height: 10px; }
.lead .big svg { margin-bottom: 5px; }
.dim { width: 58px; padding-top: 2px; margin-right: -1px; }
.dim svg { margin-bottom: 5px; }
.grid label { display: flex; align-items: center; gap: 2px; padding-left: 1px; }
.grid input {
  appearance: none;
  flex: none;
  width: 13px;
  height: 13px;
  margin: 0;
  border: 1px solid #999;
  display: grid;
  place-items: center;
}
.grid input:checked::before { content: ""; width: 4px; height: 7px; border: solid #666; border-width: 0 2px 2px 0; rotate: 45deg; margin-top: -2px; }
.wide { margin-right: 10px; }
.text { height: 20px; gap: 1px; white-space: nowrap; padding-left: 3px; }
.blk { width: 38px; height: 28px; }

.cmd {
  position: absolute;
  left: 812px;
  right: 0;
  top: 21px;
  height: 37px;
  display: flex;
  align-items: center;
  overflow: hidden;
  background: #fffffd;
  border: 2px solid #3f4550;
  border-top-color: #7d8798;
  border-right: 0;
  border-radius: 3px 0 0 3px;
  color: #222;
}
.circ { flex: none; width: 39px; height: 32px; border: 1px solid #a06a35; background: linear-gradient(#f4b57b, #f09a4c 50%, #ef8a30 55%, #f8b467); }
.cmd select, .rad { height: 20px; padding: 0 0 0 4px; border: 1px solid #777; background: #fffffd; appearance: none; }
.cmd select {
  flex: none;
  background-image: linear-gradient(45deg, transparent 45%, #555 45% 58%, transparent 58%), linear-gradient(-45deg, transparent 45%, #555 45% 58%, transparent 58%);
  background-size: 5px 5px;
  background-position: right 8px center, right 4px center;
  background-repeat: no-repeat;
}
.vis { width: 98px; margin: 0 6px 0 10px; }
.st { flex: none; width: 30px; height: 27px; margin-right: 6px; border: 1px solid #8ca6c6; border-radius: 2px; background: linear-gradient(#f4f8fc, #dce6f1); }
.st svg { fill: #111; }
.bar { flex: none; width: 1px; height: 27px; margin: 0 3px 0 -2px; background: #888; }
.cmd .dia { width: 85px; margin: 0 10px 0 1px; border-color: #8ca6c6; color: #777; }
.rad { flex: none; width: 84px; margin-left: 3px; color: #777; }

.docs { flex: none; display: flex; align-items: stretch; padding: 2px 0 0 2px; height: 30px; border-bottom: 2px solid #a3b1c8; }
.doc { display: flex; align-items: center; width: 93px; padding: 0 4px 0 17px; background: #2b5797; color: #fff; }
.doc svg { fill: none; }
.doc span { margin: 0 auto 0 1px; }
.docnav { display: flex; gap: 5px; margin-left: auto; padding: 0 4px 4px 0; }

.canvas { position: relative; flex: 1; min-height: 0; overflow: hidden; }
.draw { width: 100%; height: 100%; }
.dyn { position: absolute; width: 62px; height: 20px; border: 1px solid #4c8cb8; padding: 0 0 0 4px; text-align: center; background: #fff; color: #333; }
.radius { left: 815px; top: 346px; }
.diam { left: 909px; top: 357px; background: #0f78d0; color: #fff; box-shadow: inset 0 0 0 2px #fff; }

.sheets { flex: none; display: flex; height: 16px; background: #bfbfbb; border-top: 1px solid #444; }
.nav { width: 15px; height: 14px; background: #dcdcd8; border: 1px solid; border-color: #fff #888 #888 #fff; }
.sheet { position: relative; width: 64px; height: 14px; color: #000; font-weight: 700; z-index: 1; margin-right: -9px; }
.edge { position: absolute; left: 0; top: 0; z-index: -1; }
.add { width: 38px; height: 14px; }
.add svg { fill: none; }

.prompt { flex: none; display: flex; height: 23px; padding-top: 2px; }
.pname { display: flex; align-items: center; gap: 5px; width: 90px; padding-left: 5px; color: #2b5797; }
.pname svg { fill: none; }
.ptext { flex: 1; border: solid #999; border-width: 1px 0 0 1px; padding: 1px; color: #222; font-size: 12px; line-height: 16px; white-space: nowrap; overflow: hidden; }
.ptools { display: flex; align-items: center; width: 94px; gap: 5px; padding-left: 6px; }
.fa, .fb { font-family: "Liberation Serif", serif; font-weight: 700; color: #111; font-size: 17px; }
.fb { font-size: 12px; margin-top: 4px; }

.status { flex: none; display: flex; align-items: center; justify-content: flex-end; height: 19px; background: #2b5797; }
.status button { width: 21px; }
.status svg { width: 16px; height: 16px; }
.find { width: 132px; height: 17px; border: 0; padding: 0 3px; background: #fffffd; }
.find::placeholder { color: #aaa; opacity: 1; }
.status .minus { margin-left: 1px; }
.zoom { appearance: none; width: 104px; height: 16px; margin: 0; background: linear-gradient(#fff, #fff) center / 100% 1px no-repeat; }
.zoom::-webkit-slider-thumb { appearance: none; width: 10px; height: 13px; background: #8fb0dc; border: 2px solid #e6eefa; border-radius: 1px 1px 5px 5px; }

.task { flex: none; display: flex; height: 37px; background: #0a0a0a; color: #eee; }
.start { width: 45px; }
.search { display: flex; align-items: center; width: 323px; padding: 0 12px 0 8px; background: #f2f2f0; color: #444; }
.search input { flex: 1; min-width: 0; border: 0; padding: 0 9px; background: none; font-size: 14px; }
.search input::placeholder { color: #444; opacity: 1; }
.app { width: 46px; border-bottom: 2px solid transparent; }
.app.on { background: #3a3a3a; border-color: #7db9e8; }
.app.run { position: relative; }
.run::after { content: ""; position: absolute; left: 5px; right: 4px; bottom: -2px; height: 2px; background: #7db9e8; }
.tray { display: flex; align-items: center; margin-left: auto; padding-right: 12px; }
.tray button { width: 30px; }
.tray .t2 { width: 40px; }
.clock { display: flex; flex-direction: column; align-items: center; width: 68px; line-height: 17px; color: #fff; padding-bottom: 1px; }
.tray .note { width: 36px; }
```
